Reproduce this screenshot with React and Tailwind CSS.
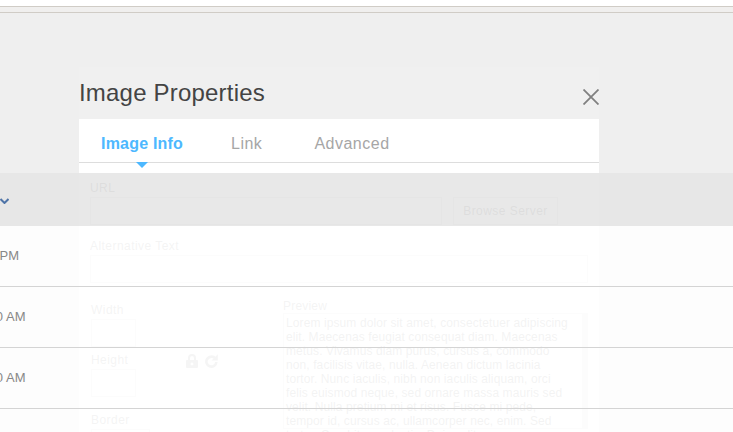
const lorem =
  'Lorem ipsum dolor sit amet, consectetuer adipiscing elit. Maecenas feugiat consequat diam. Maecenas metus. Vivamus diam purus, cursus a, commodo non, facilisis vitae, nulla. Aenean dictum lacinia tortor. Nunc iaculis, nibh non iaculis aliquam, orci felis euismod neque, sed ornare massa mauris sed velit. Nulla pretium mi et risus. Fusce mi pede, tempor id, cursus ac, ullamcorper nec, enim. Sed tortor. Curabitur molestie. Duis velit augue, condimentum at, ultrices a, luctus ut, orci.';

const rows = ['2:30 PM', '10:30 AM', '10:30 AM', ''];

function Field({ label, className }) {
  return (
    <div>
      <label className="block h-[20px] text-[12px] leading-[22px] tracking-[0.45px] text-[#8f8f8f]">{label}</label>
      <div className={`h-[28px] border border-[#e2e2e2] ${className}`} />
    </div>
  );
}

function ImageDialog() {
  return (
    <div className="absolute left-[79px] top-[67px] w-[520px] font-['Liberation_Sans',sans-serif]">
      <div className="relative flex h-[52px] items-center bg-[#f0f0f0]">
        <h1 className="text-[24px] leading-[52px] tracking-[0.2px] text-[#444]">Image Properties</h1>
        <svg className="absolute right-0 top-[22px] h-[16px] w-[16px]" viewBox="0 0 16 16" stroke="#808080" strokeWidth="1.8">
          <path d="M0.5 0.5 15.5 15.5M15.5 0.5 0.5 15.5" />
        </svg>
      </div>
      <div className="bg-white">
        <div className="relative flex h-[44px] items-center border-b border-[#ddd] pl-[22px] pt-[7px] text-[16px] tracking-[0.5px] text-[#a6a6a6]">
          <span className="font-bold tracking-[0.2px] text-[#4db8ff]">Image Info</span>
          <span className="ml-[48px]">Link</span>
          <span className="ml-[52px]">Advanced</span>
          <span className="absolute left-[57px] top-[43px] h-0 w-0 border-x-[6px] border-t-[6px] border-x-transparent border-t-[#4db8ff]" />
        </div>
        <div className="px-[11px] pt-[14px]">
          <div className="mb-[10px] flex items-end gap-[11px]">
            <div className="w-[352px]">
              <Field label="URL" className="w-full" />
            </div>
            <div className="flex h-[28px] w-[105px] items-center justify-center border border-[#e2e2e2] text-[12px] tracking-[0.45px] text-[#8f8f8f]">
              Browse Server
            </div>
          </div>
          <div className="mb-[15px] w-[498px]">
            <Field label="Alternative Text" className="w-full" />
          </div>
          <div className="flex">
            <div className="relative w-[193px] pl-[1px] pt-[1px]">
              <Field label="Width" className="w-[45px]" />
              <div className="mt-[2px]">
                <Field label="Height" className="w-[45px]" />
              </div>
              <div className="mt-[12px]">
                <Field label="Border" className="w-[59px]" />
              </div>
              <div className="absolute left-[96px] top-[56px] flex items-center gap-[7px] text-[#999]">
                <svg className="h-[14px] w-[12px]" viewBox="0 0 12 14" fill="currentColor">
                  <path fillRule="evenodd" d="M2 6V4a4 4 0 0 1 8 0v2h1a1 1 0 0 1 1 1v6a1 1 0 0 1-1 1H1a1 1 0 0 1-1-1V7a1 1 0 0 1 1-1h1Zm2 0h4V4a2 2 0 0 0-4 0v2Zm2 2.5A1.5 1.5 0 0 0 5.3 11.3h1.4A1.5 1.5 0 0 0 6 8.5Z" />
                </svg>
                <svg className="h-[14px] w-[13px]" viewBox="0 0 13 14" fill="none" stroke="currentColor" strokeWidth="2.6">
                  <path d="M10.4 4.6A5 5 0 1 0 11.4 8" />
                  <path d="M12.8 0.2v6.2H6.6Z" fill="currentColor" stroke="none" />
                </svg>
              </div>
            </div>
            <div className="w-[305px]">
              <label className="block h-[15px] text-[12px] leading-[16px] tracking-[0.2px] text-[#8f8f8f]">Preview</label>
              <div className="relative h-[116px] border border-[#e2e2e2] pl-[2px] pr-[18px] pt-[2px]">
                <p className="text-[12px] leading-[14px] tracking-[0.1px] text-[#888]">{lorem}</p>
                <div className="absolute inset-y-0 right-0 w-[5px] bg-[#e2e2e2]" />
              </div>
            </div>
          </div>
        </div>
      </div>
    </div>
  );
}

export default function App() {
  return (
    <div className="relative h-[432px] w-[733px] overflow-hidden bg-[#efefef] font-['Liberation_Sans',sans-serif]">
      <ImageDialog />
      <div className="h-[6px] bg-white" />
      <div className="h-[7px] border-y border-[#d0ccc6] bg-[#f0efee]" />
      <div className="h-[160px]" />
      <div className="relative z-10">
        <div className="flex h-[53px] items-center bg-[#e6e6e6]/90">
          <svg className="mt-[2px] h-[6px] w-[9px]" viewBox="0 0 9 6" fill="none" stroke="#4f74a8" strokeWidth="2">
            <path d="M0.5 1 4.5 5 8.5 1" />
          </svg>
        </div>
        {rows.map((time, i) => (
          <div key={i} className="flex h-[61px] items-center border-b border-[#d4d4d4] bg-white/90 text-[13px] tracking-[0.1px] text-[#888]">
            <span className="ml-[-30px] whitespace-nowrap">{time}</span>
          </div>
        ))}
      </div>
    </div>
  );
}
